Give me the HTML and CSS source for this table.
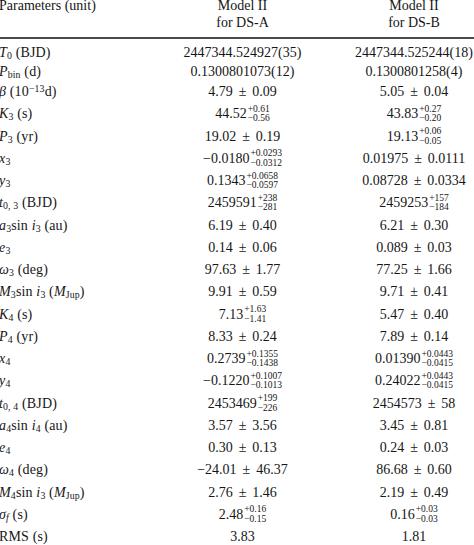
FILE: index.html
```html
<!DOCTYPE html>
<html>
<head>
<meta charset="utf-8">
<link rel="stylesheet" href="styles.css">
</head>
<body>
<table class="params">
<colgroup><col class="c-name"><col class="c-a"><col class="c-b"></colgroup>
<thead>
<tr><th class="name"><span class="l1">Parameters (unit)</span></th><th><span class="l1">Model II</span><span class="l2">for DS-A</span></th><th><span class="l1">Model II</span><span class="l2">for DS-B</span></th></tr>
</thead>
<tbody>
<tr class="first short"><td><i>T</i><span class="sb">0</span> (BJD)</td><td>2447344.524927(35)</td><td>2447344.525244(18)</td></tr>
<tr class="short"><td><i>P</i><span class="sb">bin</span> (d)</td><td>0.1300801073(12)</td><td>0.1300801258(4)</td></tr>
<tr><td><i>β</i> (10<span class="sp">−13</span>d)</td><td>4.79 ± 0.09</td><td>5.05 ± 0.04</td></tr>
<tr><td><i>K</i><span class="sb">3</span> (s)</td><td>44.52<span class="pm"><span>+0.61</span><span>−0.56</span></span></td><td>43.83<span class="pm"><span>+0.27</span><span>−0.20</span></span></td></tr>
<tr><td><i>P</i><span class="sb">3</span> (yr)</td><td>19.02 ± 0.19</td><td>19.13<span class="pm"><span>+0.06</span><span>−0.05</span></span></td></tr>
<tr><td><i>x</i><span class="sb">3</span></td><td>−0.0180<span class="pm"><span>+0.0293</span><span>−0.0312</span></span></td><td>0.01975 ± 0.0111</td></tr>
<tr><td><i>y</i><span class="sb">3</span></td><td>0.1343<span class="pm"><span>+0.0658</span><span>−0.0597</span></span></td><td>0.08728 ± 0.0334</td></tr>
<tr><td><i>t</i><span class="sb">0, 3</span> (BJD)</td><td>2459591<span class="pm"><span>+238</span><span>−281</span></span></td><td>2459253<span class="pm"><span>+157</span><span>−184</span></span></td></tr>
<tr><td><i>a</i><span class="sb">3</span>sin <i>i</i><span class="sb">3</span> (au)</td><td>6.19 ± 0.40</td><td>6.21 ± 0.30</td></tr>
<tr><td><i>e</i><span class="sb">3</span></td><td>0.14 ± 0.06</td><td>0.089 ± 0.03</td></tr>
<tr><td><i>ω</i><span class="sb">3</span> (deg)</td><td>97.63 ± 1.77</td><td>77.25 ± 1.66</td></tr>
<tr><td><i>M</i><span class="sb">3</span>sin <i>i</i><span class="sb">3</span> (<i>M</i><span class="sb">Jup</span>)</td><td>9.91 ± 0.59</td><td>9.71 ± 0.41</td></tr>
<tr><td><i>K</i><span class="sb">4</span> (s)</td><td>7.13<span class="pm"><span>+1.63</span><span>−1.41</span></span></td><td>5.47 ± 0.40</td></tr>
<tr><td><i>P</i><span class="sb">4</span> (yr)</td><td>8.33 ± 0.24</td><td>7.89 ± 0.14</td></tr>
<tr><td><i>x</i><span class="sb">4</span></td><td>0.2739<span class="pm"><span>+0.1355</span><span>−0.1438</span></span></td><td>0.01390<span class="pm"><span>+0.0443</span><span>−0.0415</span></span></td></tr>
<tr><td><i>y</i><span class="sb">4</span></td><td>−0.1220<span class="pm"><span>+0.1007</span><span>−0.1013</span></span></td><td>0.24022<span class="pm"><span>+0.0443</span><span>−0.0415</span></span></td></tr>
<tr><td><i>t</i><span class="sb">0, 4</span> (BJD)</td><td>2453469<span class="pm"><span>+199</span><span>−226</span></span></td><td>2454573 ± 58</td></tr>
<tr><td><i>a</i><span class="sb">4</span>sin <i>i</i><span class="sb">4</span> (au)</td><td>3.57 ± 3.56</td><td>3.45 ± 0.81</td></tr>
<tr><td><i>e</i><span class="sb">4</span></td><td>0.30 ± 0.13</td><td>0.24 ± 0.03</td></tr>
<tr><td><i>ω</i><span class="sb">4</span> (deg)</td><td>−24.01 ± 46.37</td><td>86.68 ± 0.60</td></tr>
<tr><td><i>M</i><span class="sb">4</span>sin <i>i</i><span class="sb">3</span> (<i>M</i><span class="sb">Jup</span>)</td><td>2.76 ± 1.46</td><td>2.19 ± 0.49</td></tr>
<tr><td><i>σ</i><span class="sb"><i>f</i></span> (s)</td><td>2.48<span class="pm"><span>+0.16</span><span>−0.15</span></span></td><td>0.16<span class="pm"><span>+0.03</span><span>−0.03</span></span></td></tr>
<tr><td>RMS (s)</td><td>3.83</td><td>1.81</td></tr>
</tbody>
</table>
</body>
</html>
```
FILE: styles.css
```css
html, body {
  margin: 0;
  padding: 0;
  overflow: hidden;
  background: #fff;
}
body {
  font-family: "Liberation Serif", "Times New Roman", serif;
  font-size: 14px;
  color: #161616;
}
.params {
  border-collapse: collapse;
  table-layout: fixed;
  width: 501px;
  margin: 0 0 0 -1px;
}
.c-name { width: 158px; }
.c-a { width: 171px; }
.c-b { width: 172px; }
.params th {
  font-weight: normal;
  text-align: center;
  vertical-align: top;
  padding: 0 0 4px 0;
  border-bottom: 2px solid #4a4a4a;
}
.params th.name { text-align: left; }
.l1 { display: block; line-height: 12.6px; }
.l2 { display: block; line-height: 20.4px; }
.params td {
  padding: 0;
  vertical-align: top;
  line-height: 22.25px;
  text-align: center;
  white-space: nowrap;
  word-spacing: 2.5px;
}
.params td:first-child {
  text-align: left;
  word-spacing: 0;
  letter-spacing: 0.15px;
}
.params tr.short td { line-height: 19px; }
.params tr.first td { padding-top: 4px; }
.sb { font-size: 0.7em; vertical-align: -0.25em; line-height: 0; }
.sp { font-size: 0.7em; vertical-align: 0.45em; line-height: 0; }
.pm {
  display: inline-block;
  vertical-align: -3px;
  font-size: 9.5px;
  line-height: 9.5px;
  text-align: left;
  margin-left: 1px;
  word-spacing: 0;
}
.pm span { display: block; }
```
